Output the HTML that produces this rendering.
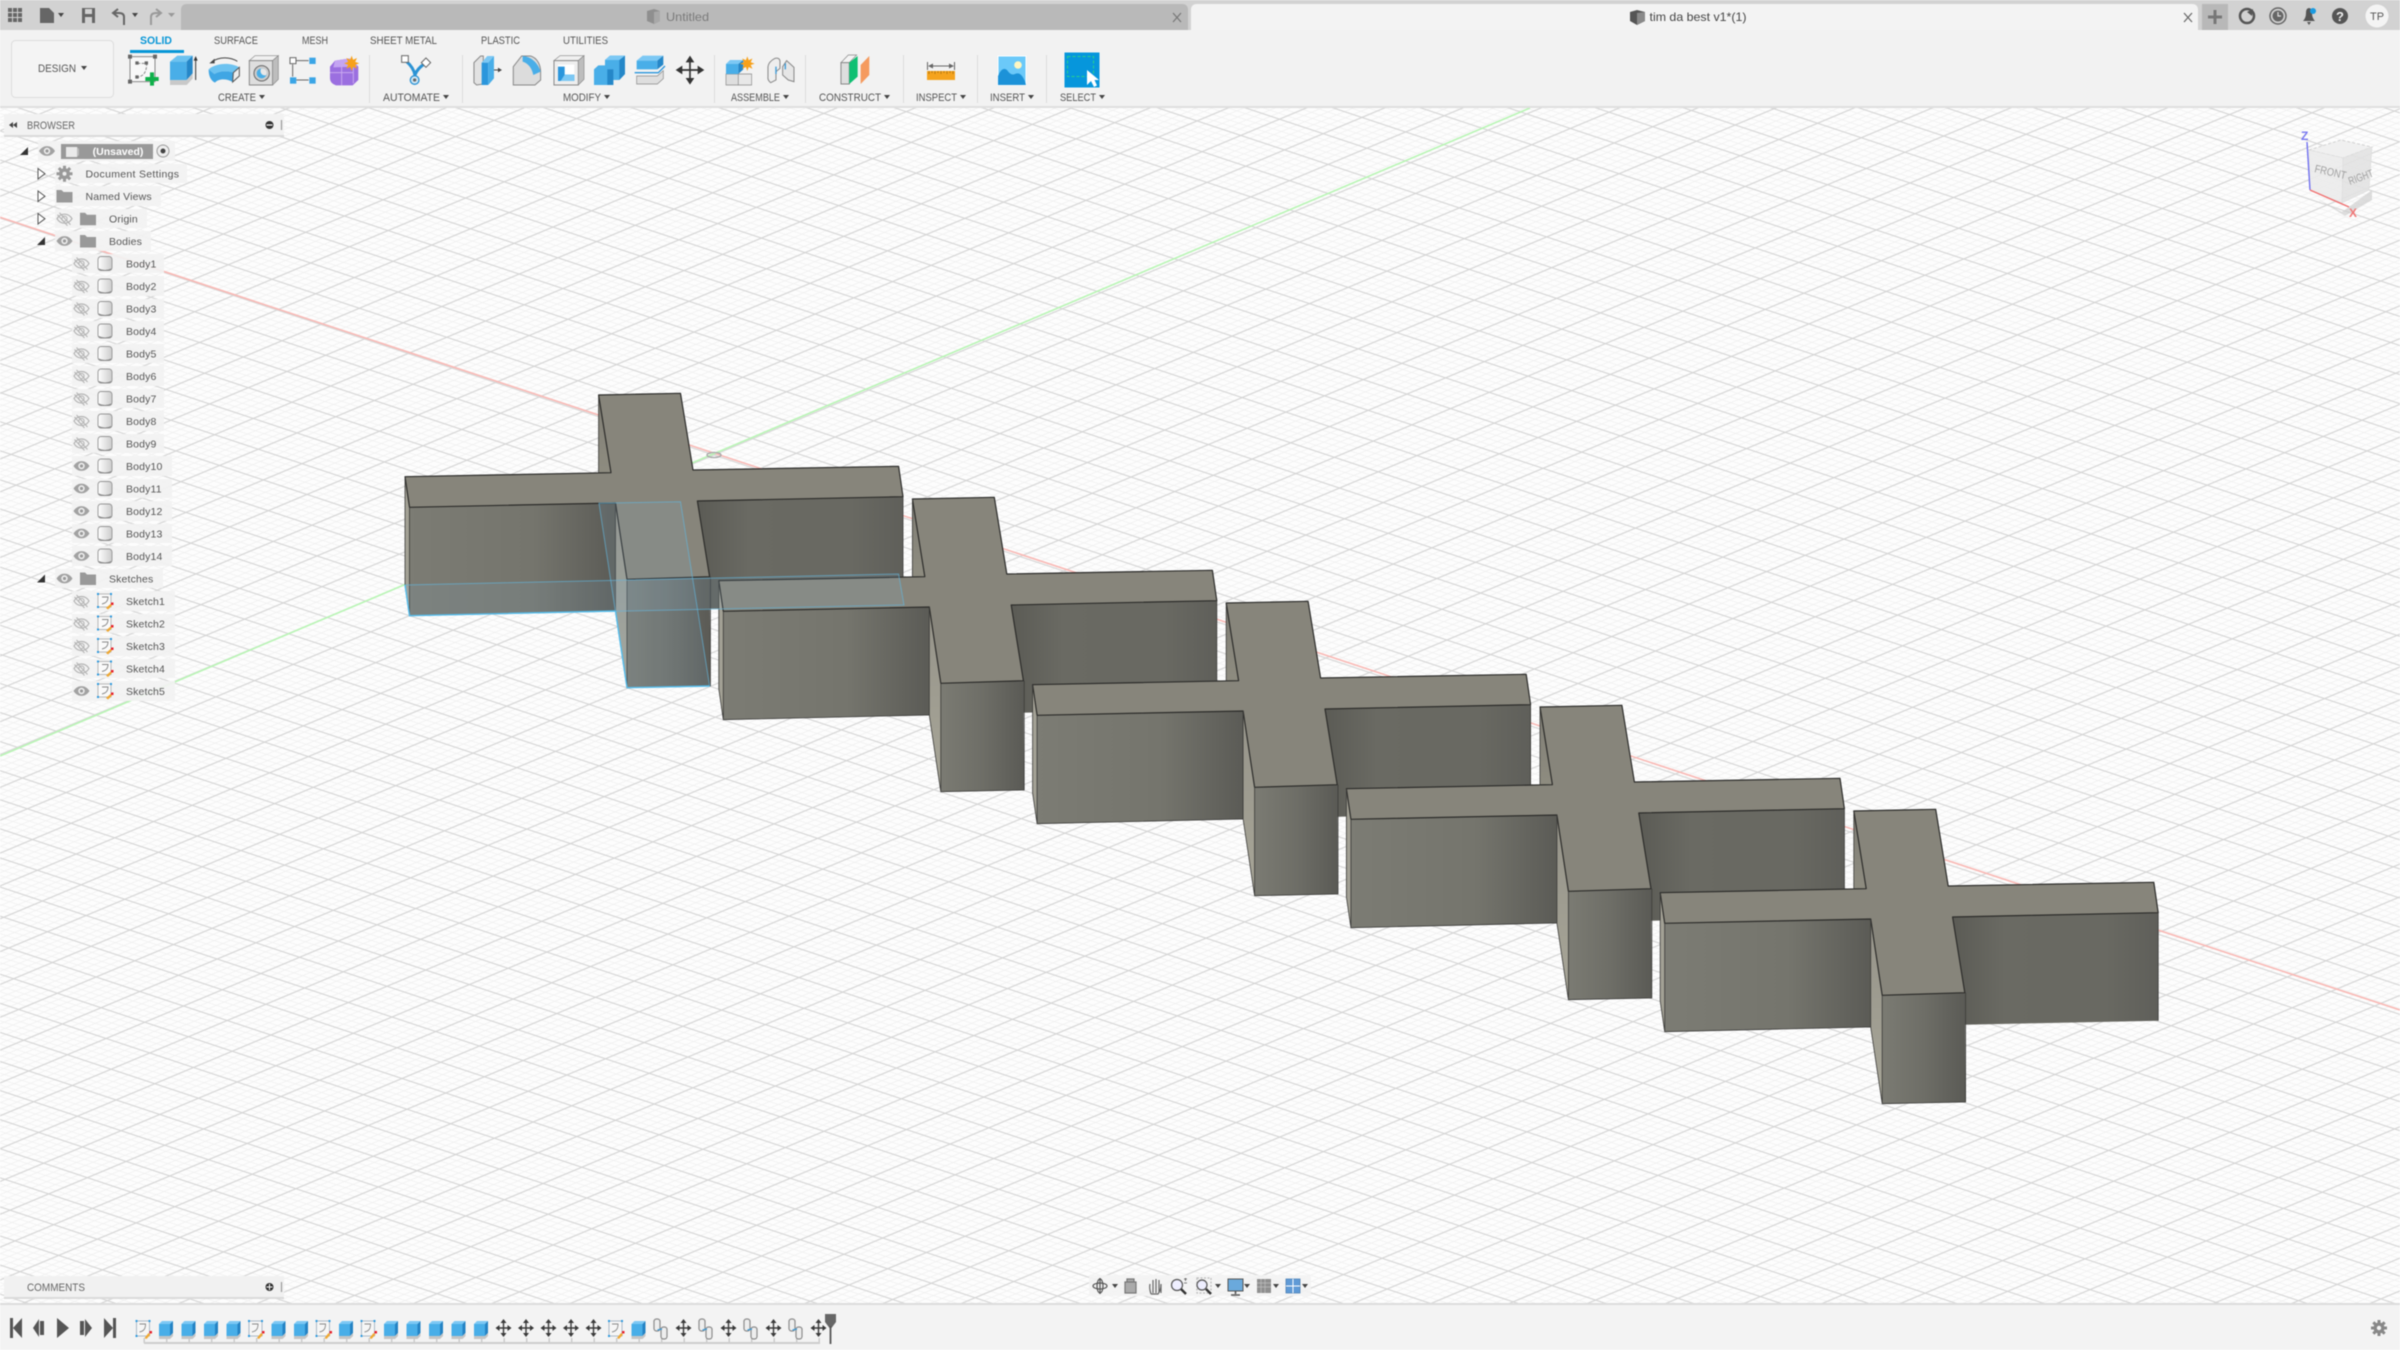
<!DOCTYPE html>
<html lang="en">
<head>
<meta charset="utf-8">
<title>tim da best v1*(1)</title>
<style>
html,body{margin:0;padding:0;background:#fff;width:2400px;height:1350px;overflow:hidden}
svg{display:block;filter:blur(.45px)}
text{font-family:"Liberation Sans",sans-serif}
.t{font-size:11px;fill:#555}
.b{font-size:10.5px;fill:#555;letter-spacing:.15px}
</style>
</head>
<body>
<svg xmlns="http://www.w3.org/2000/svg" width="2400" height="1350" viewBox="0 0 2400 1350">
<defs>
<pattern id="grid" width="50" height="50" patternUnits="userSpaceOnUse" patternTransform="matrix(.874 .29 .774 -.3248 672.8 455.87)">
<rect width="50" height="50" fill="#fdfdfd"/>
<path d="M5 0V50M15 0V50M35 0V50M45 0V50M0 5H50M0 15H50M0 35H50M0 45H50" stroke="#f0f0f0" stroke-width="1.3" fill="none"/>
<path d="M25 0V50M0 25H50" stroke="#d6d6d6" stroke-width="2" fill="none"/>
</pattern>
<linearGradient id="gl" x1="0" x2="1" y1="0" y2="0"><stop offset="0" stop-color="#7c7c74"/><stop offset=".6" stop-color="#75756d"/><stop offset="1" stop-color="#5b5b56"/></linearGradient>
<linearGradient id="gr" x1="0" x2="1" y1="0" y2="0"><stop offset="0" stop-color="#5b5b55"/><stop offset=".25" stop-color="#6a6a63"/><stop offset=".75" stop-color="#696962"/><stop offset="1" stop-color="#5f5f5a"/></linearGradient>
<linearGradient id="gb" x1="0" x2="1" y1="0" y2="0"><stop offset="0" stop-color="#7b7b73"/><stop offset=".5" stop-color="#6e6e67"/><stop offset="1" stop-color="#5a5a55"/></linearGradient>
<linearGradient id="gw" x1="0" x2="0" y1="0" y2="1"><stop offset="0" stop-color="#807e75"/><stop offset="1" stop-color="#8e8c80"/></linearGradient>
<linearGradient id="gs" x1="0" x2="0" y1="0" y2="1"><stop offset="0" stop-color="#96948a"/><stop offset="1" stop-color="#a8a698"/></linearGradient>
<linearGradient id="bi" x1="0" x2="1" y1="0" y2="0"><stop offset="0" stop-color="#fff"/><stop offset="1" stop-color="#ccc"/></linearGradient>

<g id="cross">
<polygon points="598.6,395 611,472.7 598.6,473" fill="url(#gw)"/>
<polygon points="697.4,501 903,496.7 903,604.7 697.4,609" fill="url(#gr)"/>
<polygon points="405,476.7 409.5,507.3 409.5,615.7 405,585" fill="#a3a195"/>
<polygon points="409.5,507.3 615.5,503 615.5,611 409.5,615.7" fill="url(#gl)"/>
<polygon points="615.5,503 627,579.3 627,687.7 615.5,611" fill="url(#gs)"/>
<polygon points="627,579.3 709.6,576.7 710.4,686 627,687.7" fill="url(#gb)"/>
<polygon points="598.6,395 680.5,393.3 693,470 898.6,466.3 903,496.7 697.4,501 709.6,576.7 627,579.3 615.5,503 409.5,507.3 405,476.7 611,472.7" fill="#87857b" stroke="#2c2c2a" stroke-width="1.2" stroke-linejoin="round"/>
<path d="M409.5 507.3V615.7L615.5 611M405 476.7V585L409.5 615.7M615.5 503V611L627 687.7L710.4 686V576.7M627 579.3V687.7M903 496.7V604.7M598.6 395V473" fill="none" stroke="#3a3a38" stroke-width=".8"/>
</g>

<g id="eye"><path d="M-8 0C-4 -6.5 4 -6.5 8 0C4 6.5 -4 6.5 -8 0Z" fill="#a2a2a2"/><circle r="3.2" fill="#eee"/><circle r="1.6" fill="#999"/></g>
<g id="eyeoff"><path d="M-7.5 0C-4 -6 4 -6 7.5 0C4 6 -4 6 -7.5 0Z" fill="#f2f2f2" stroke="#b4b4b4" stroke-width="1.2"/><circle r="2.6" fill="none" stroke="#b4b4b4"/><path d="M-5 -6L6 6M-7 -4L3 7" stroke="#b4b4b4" stroke-width="1.1"/></g>
<path id="folder" d="M-8 -6H-3L-1 -4H8V6.5H-8Z" fill="#999"/>
<g id="body"><rect x="-7" y="-7" width="14" height="14" rx="3" fill="url(#bi)" stroke="#959595" stroke-width=".9"/><path d="M-6.5 5.5Q0 8.5 6.5 5.5" fill="none" stroke="#888" stroke-width="1"/></g>
<g id="ss">
<rect x="-7" y="-7" width="13" height="13" fill="#fafafa" stroke="#aaa" stroke-width=".8"/>
<path d="M-3 -4H3C3 -1 2 2 -3 3" fill="none" stroke="#888" stroke-width=".9"/>
<path d="M-8 -8h2v2h-2zM5 -8h2v2h-2zM-8 5h2v2h-2zM3 5h2v2h-2z" fill="#2f9be0"/>
<path d="M1 7L5.5 3L7 4.5L3 8.5Z" fill="#f0a832"/><rect x="6" y="1.5" width="2.5" height="2.5" fill="#e8222c"/>
</g>
<g id="te">
<polygon points="1,8 4,5 15,5 12,8" fill="#7cc8f4"/>
<polygon points="1,8 12,8 12,20 1,20" fill="#48aee8"/>
<polygon points="12,8 15,5 15,17 12,20" fill="#2483c4"/>
<polygon points="1,20 12,20 15,17 15,20 12,23 1,23" fill="#c4c4c4"/>
</g>
<g id="ts">
<rect x="1" y="5" width="13" height="15" fill="#f6f6f6" stroke="#9ab" stroke-width=".8"/>
<path d="M4 8H10C10 12 9 15 4 16" fill="none" stroke="#888" stroke-width=".9"/>
<path d="M0 4h2v2h-2zM13 4h2v2h-2zM0 19h2v2h-2z" fill="#2f9be0"/>
<path d="M9 22L13 17L15 18.5L11 23Z" fill="#f0a832"/><rect x="14" y="15" width="2.5" height="2.5" fill="#e8222c"/>
</g>
<g id="tm" fill="#3a3a3a">
<path d="M7.3 7H8.7V19H7.3ZM2 12.3H14V13.7H2Z"/>
<path d="M8 4L11 8H5ZM8 22L5 18H11ZM0 13L4 10V16ZM16 13L12 10V16Z"/>
</g>
<g id="tj" fill="#eee" stroke="#8a8a8a" stroke-width="1.2">
<rect x="1" y="3" width="6" height="12" rx="2.5"/><rect x="8" y="11" width="6" height="12" rx="2.5"/>
<path d="M4.5 14L9 13" stroke="#3a9ad8" fill="none"/>
</g>
<polygon id="burst" points="0,-10 1.9,-4.6 7,-7 4.6,-1.9 10,0 4.6,1.9 7,7 1.9,4.6 0,10 -1.9,4.6 -7,7 -4.6,1.9 -10,0 -4.6,-1.9 -7,-7 -1.9,-4.6" fill="#f7a11a"/>
<polygon id="dn" points="0,0 6,0 3,4" fill="#444"/>
</defs>

<!-- viewport -->
<rect x="0" y="106" width="2400" height="1200" fill="url(#grid)"/>
<line x1="0" y1="217.3" x2="2400" y2="1010" stroke="#f9b9b5" stroke-width="1.6"/>
<line x1="0" y1="756" x2="1530" y2="108" stroke="#b9f5b5" stroke-width="1.6"/>
<ellipse cx="714" cy="455" rx="7" ry="2.6" fill="none" stroke="#aaa" stroke-width="1.4"/>

<use href="#cross"/>
<use href="#cross" transform="translate(313.8 104)"/>
<polygon points="405,585 898.6,574 904,605 409.5,615.7" fill="#86b4cf" fill-opacity=".14" stroke="#62b6dc" stroke-opacity=".65" stroke-width="1"/>
<polygon points="599,503.3 680.5,501.7 709.6,686 627,687.7" fill="#86b4cf" fill-opacity=".14" stroke="#62b6dc" stroke-opacity=".65" stroke-width="1"/>
<path d="M405 585L409.5 615.7L615.5 611M627 687.7L709.6 686M615.5 611L627 687.7" fill="none" stroke="#55bdec" stroke-width="1.4"/>
<use href="#cross" transform="translate(627.6 208)"/>
<use href="#cross" transform="translate(941.4 312)"/>
<use href="#cross" transform="translate(1255.2 416)"/>

<!-- view cube -->
<g>
<polygon points="2316,198 2342,212 2372,190 2372,200 2345,216" fill="#cfcfcf" opacity=".7"/>
<polygon points="2309,150 2341,140 2372,147 2343,158" fill="#f0f0f0" stroke="#c8c8c8" stroke-dasharray="3 2" stroke-width=".8"/>
<polygon points="2309,150 2343,158 2342,203 2310,190" fill="#ebebeb" fill-opacity=".9" stroke="#ddd" stroke-width=".6"/>
<polygon points="2343,158 2372,147 2369,190 2342,203" fill="#e2e2e2" fill-opacity=".9" stroke="#ddd" stroke-width=".6"/>
<text transform="translate(2314 172) rotate(13) scale(.85 1)" font-size="11" fill="#a0a0a0">FRONT</text>
<text transform="translate(2350 185) rotate(-20) scale(.75 1)" font-size="11" fill="#a0a0a0">RIGHT</text>
<line x1="2307" y1="142" x2="2310" y2="190" stroke="#6f6ff0" stroke-width="1.4"/>
<line x1="2310" y1="190" x2="2349" y2="207" stroke="#f07070" stroke-width="1.4"/>
<text x="2301" y="140" font-size="12" font-weight="bold" fill="#7a7af0">Z</text>
<text x="2349" y="217" font-size="12" font-weight="bold" fill="#f07878">X</text>
</g>

<!-- top tab bar -->
<rect x="0" y="0" width="2400" height="30" fill="#d2d2d2"/>
<path d="M181 30V10Q181 4 187 4H1182Q1188 4 1188 10V30Z" fill="#b9b9b9"/>
<path d="M1191 30V10Q1191 4 1197 4H2192Q2198 4 2198 10V30Z" fill="#f3f3f3"/>
<rect x="2202" y="4" width="26" height="26" fill="#b8b8b8"/>
<g fill="#666">
<path d="M8 8h4v4H8zM13 8h4v4h-4zM18 8h4v4h-4zM8 13h4v4H8zM13 13h4v4h-4zM18 13h4v4h-4zM8 18h4v4H8zM13 18h4v4h-4zM18 18h4v4h-4z"/>
<path d="M40 8H49L54 13V23H40Z"/>
<path d="M82 8H95V23H82ZM85 9V14H92V9ZM85 17V23H92V17Z" fill-rule="evenodd"/>
</g>
<use href="#dn" x="58" y="13"/>
<path d="M124 25V17Q124 13 119 13H114M118 9L113 13L118 17" fill="none" stroke="#666" stroke-width="2"/>
<use href="#dn" x="132" y="13"/>
<path d="M151 25V17Q151 13 156 13H160M156 9L161 13L156 17" fill="none" stroke="#9a9a9a" stroke-width="2"/>
<polygon points="168,13 175,13 171.5,17" fill="#999"/>
<path d="M647 11L654 9L660 11V21L654 24L647 21Z" fill="#8f8f8f"/><path d="M654 12V24L660 21V11Z" fill="#a8a8a8"/>
<text x="666" y="21" font-size="12" fill="#7b7b7b" textLength="43" lengthAdjust="spacingAndGlyphs">Untitled</text>
<path d="M1173 13L1181 22M1181 13L1173 22" stroke="#777" stroke-width="1.2"/>
<path d="M1630 12L1637 10L1645 12V21L1637 25L1630 21Z" fill="#555"/><path d="M1637 13V25L1645 21V12Z" fill="#8a8a8a"/>
<text x="1649.5" y="21" font-size="12" fill="#444" textLength="97" lengthAdjust="spacingAndGlyphs">tim da best v1*(1)</text>
<path d="M2184 13L2192 22M2192 13L2184 22" stroke="#666" stroke-width="1.2"/>
<path d="M2215 10V24M2208 17H2222" stroke="#777" stroke-width="3"/>
<circle cx="2247" cy="16" r="7" fill="none" stroke="#555" stroke-width="2.5"/><path d="M2247 12L2253 9L2252 16Z" fill="#555"/>
<circle cx="2278" cy="16" r="8" fill="none" stroke="#666" stroke-width="1.5"/><circle cx="2278" cy="16" r="5.5" fill="#666"/><path d="M2278 12V16H2281" stroke="#ddd" stroke-width="1.2" fill="none"/>
<path d="M2303 21Q2306 18 2306 13Q2306 8 2309 8Q2312 8 2312 13Q2312 18 2315 21ZM2307 22H2311L2309 25Z" fill="#555"/><circle cx="2313" cy="11" r="3" fill="#1a9ae0"/>
<circle cx="2340" cy="16" r="8" fill="#555"/><text x="2340" y="21" font-size="13" font-weight="bold" fill="#eee" text-anchor="middle">?</text>
<circle cx="2377" cy="16" r="11.5" fill="#f4f4f4"/><text x="2377" y="20" font-size="11" fill="#555" text-anchor="middle" textLength="14" lengthAdjust="spacingAndGlyphs">TP</text>

<!-- toolbar -->
<rect x="0" y="30" width="2400" height="76" fill="#f2f2f2"/>
<rect x="0" y="106" width="2400" height="2" fill="#dfdfdf"/>
<rect x="11.5" y="40.5" width="102" height="57" rx="4" fill="#f4f4f4" stroke="#dcdcdc"/>
<text class="t" x="38" y="72" textLength="38" lengthAdjust="spacingAndGlyphs">DESIGN</text><use href="#dn" x="81" y="66"/>

<text x="140" y="44" font-size="11" font-weight="bold" fill="#0696d7" textLength="32" lengthAdjust="spacingAndGlyphs">SOLID</text>
<rect x="130" y="50" width="54" height="3" fill="#0696d7"/>
<text class="t" x="214" y="44" textLength="44" lengthAdjust="spacingAndGlyphs">SURFACE</text>
<text class="t" x="302" y="44" textLength="26" lengthAdjust="spacingAndGlyphs">MESH</text>
<text class="t" x="370" y="44" textLength="67" lengthAdjust="spacingAndGlyphs">SHEET METAL</text>
<text class="t" x="481" y="44" textLength="39" lengthAdjust="spacingAndGlyphs">PLASTIC</text>
<text class="t" x="563" y="44" textLength="45" lengthAdjust="spacingAndGlyphs">UTILITIES</text>

<g stroke="#dcdcdc" stroke-width="1">
<path d="M369.5 55V103M462.5 55V103M714.5 55V103M805.5 55V103M903.5 55V103M977.5 55V103M1046.5 55V103"/>
</g>
<text class="t" x="218" y="101" textLength="38" lengthAdjust="spacingAndGlyphs">CREATE</text><use href="#dn" x="259" y="95"/>
<text class="t" x="383" y="101" textLength="57" lengthAdjust="spacingAndGlyphs">AUTOMATE</text><use href="#dn" x="443" y="95"/>
<text class="t" x="563" y="101" textLength="38" lengthAdjust="spacingAndGlyphs">MODIFY</text><use href="#dn" x="604" y="95"/>
<text class="t" x="731" y="101" textLength="49" lengthAdjust="spacingAndGlyphs">ASSEMBLE</text><use href="#dn" x="783" y="95"/>
<text class="t" x="819" y="101" textLength="62" lengthAdjust="spacingAndGlyphs">CONSTRUCT</text><use href="#dn" x="884" y="95"/>
<text class="t" x="916" y="101" textLength="41" lengthAdjust="spacingAndGlyphs">INSPECT</text><use href="#dn" x="960" y="95"/>
<text class="t" x="990" y="101" textLength="35" lengthAdjust="spacingAndGlyphs">INSERT</text><use href="#dn" x="1028" y="95"/>
<text class="t" x="1060" y="101" textLength="36" lengthAdjust="spacingAndGlyphs">SELECT</text><use href="#dn" x="1099" y="95"/>

<!-- toolbar icons traced in zoom coordinates -->
<g transform="translate(120 30) scale(.3333)">
<!-- sketch -->
<rect x="30" y="80" width="75" height="75" fill="#f8f8f8" stroke="#888" stroke-width="3"/>
<path d="M52 100H80C80 125 72 138 52 142" fill="none" stroke="#888" stroke-width="3" stroke-dasharray="9 4"/>
<path d="M24 74h12v12H24zM99 74h12v12H99zM24 149h12v12H24z" fill="#666"/>
<path d="M46 94h10v10H46zM74 94h10v10H74zM46 136h10v10H46z" fill="#666"/>
<path d="M90 127h12v14h14v12h-14v14H90v-14H76v-12h14Z" fill="#0fb04a"/>
<!-- extrude -->
<polygon points="150,95 172,77 218,77 200,95" fill="#6cc2f0"/>
<polygon points="150,95 200,95 200,150 150,150" fill="#49aee8"/>
<polygon points="200,95 218,77 218,130 200,150" fill="#2587c8"/>
<polygon points="150,150 200,150 218,130 218,146 200,165 150,165" fill="#c9c9c9"/>
<path d="M227 150V88" stroke="#333" stroke-width="3"/><polygon points="227,78 221,92 233,92" fill="#333"/>
<!-- revolve -->
<path d="M266 118C285 100 330 95 358 112L340 128C325 122 300 122 283 132Z" fill="#6cc2f0"/>
<path d="M266 118L283 132C300 122 325 122 340 128L338 156C320 145 295 145 285 158C270 150 266 135 266 118Z" fill="#3fa6e4"/>
<path d="M340 128L358 112V138L338 156Z" fill="#eee" stroke="#555" stroke-width="3"/>
<path d="M276 95C298 80 330 80 352 94" fill="none" stroke="#444" stroke-width="3"/><polygon points="268,100 284,86 284,100" fill="#444"/>
<!-- hole -->
<polygon points="388,92 405,77 475,77 458,92" fill="#f0f0f0" stroke="#888" stroke-width="2"/>
<polygon points="388,92 458,92 458,165 388,165" fill="#dedede" stroke="#888" stroke-width="3"/>
<polygon points="458,92 475,77 475,148 458,165" fill="#bdbdbd" stroke="#888" stroke-width="2"/>
<circle cx="425" cy="130" r="23" fill="#ccc" stroke="#666" stroke-width="3"/>
<circle cx="425" cy="130" r="15" fill="#4aaee6"/><path d="M423 116C418 128 426 138 438 136C444 124 436 114 423 116Z" fill="#e8e8e8"/>
<!-- pattern -->
<path d="M529 92H566M518 103V140M529 150H566" stroke="#666" stroke-width="3"/>
<rect x="510" y="83" width="18" height="18" fill="#fff" stroke="#666" stroke-width="3"/>
<rect x="568" y="83" width="19" height="19" fill="#3aa5e6"/><rect x="510" y="142" width="19" height="19" fill="#3aa5e6"/><rect x="568" y="142" width="19" height="19" fill="#3aa5e6"/>
<!-- form -->
<path d="M645 92L690 85L715 110V150L698 166H648Q630 160 630 145V110Z" fill="#9b6fe0"/>
<path d="M645 92L690 85L712 110L640 112Z" fill="#c4a4f2"/>
<path d="M630 128H700M665 100V166M700 112V160" stroke="#c9a9f0" stroke-width="3" fill="none"/>
<use href="#burst" transform="translate(695 100) scale(2.3)"/>
<!-- automate -->
<path d="M860 95Q880 112 885 135Q892 115 916 100" fill="none" stroke="#2c93d4" stroke-width="9"/>
<path d="M885 130V145" stroke="#2c93d4" stroke-width="9"/>
<rect x="845" y="77" width="20" height="20" fill="#fff" stroke="#666" stroke-width="3"/>
<polygon points="918,84 932,98 918,112 904,98" fill="#fff" stroke="#666" stroke-width="3"/>
<circle cx="884" cy="150" r="13" fill="#cfe6f4" stroke="#2c93d4" stroke-width="4"/><circle cx="884" cy="150" r="5" fill="#666"/>
<!-- press pull -->
<polygon points="1062,98 1082,78 1090,78 1090,162 1070,165 1062,158" fill="#e2e2e2" stroke="#888" stroke-width="3"/>
<polygon points="1085,98 1102,78 1122,78 1105,98" fill="#7cc8f4"/>
<polygon points="1085,98 1105,98 1105,165 1085,165" fill="#2b96dc"/>
<polygon points="1105,98 1122,78 1122,145 1105,165" fill="#49aee8"/>
<path d="M1122 120H1138" stroke="#444" stroke-width="3"/><polygon points="1146,120 1134,113 1134,127" fill="#444"/>
<!-- fillet -->
<path d="M1180 110L1205 78H1232C1252 84 1262 105 1262 125V150L1245 165H1180Z" fill="#dcdcdc" stroke="#888" stroke-width="3"/>
<path d="M1208 78C1235 80 1255 100 1262 125L1240 135C1236 115 1225 100 1208 95Z" fill="#49aee8"/>
</g>
<g transform="translate(530 30) scale(.3333)">
<!-- shell -->
<polygon points="72,92 90,77 162,77 145,92" fill="#f0f0f0" stroke="#888" stroke-width="2"/>
<polygon points="72,92 145,92 145,165 72,165" fill="#eeeeee" stroke="#888" stroke-width="3"/>
<polygon points="145,92 162,77 162,148 145,165" fill="#bdbdbd" stroke="#888" stroke-width="2"/>
<rect x="84" y="104" width="49" height="49" fill="#fff"/>
<polygon points="84,110 104,110 104,134 133,134 133,153 84,153" fill="#2b96dc"/><polygon points="104,134 133,134 133,153 92,153" fill="#7cc8f4"/>
<!-- combine -->
<polygon points="192,118 205,106 225,106 225,90 240,77 285,77 285,132 268,150 250,150 250,165 192,165" fill="#49aee8"/>
<polygon points="268,90 285,77 285,132 268,150" fill="#2587c8"/>
<polygon points="225,90 240,77 285,77 268,90" fill="#7cc8f4"/>
<polygon points="232,118 250,118 250,165 232,165" fill="#2587c8"/>
<!-- offset -->
<polygon points="320,92 338,77 400,77 382,92" fill="#7cc8f4"/>
<polygon points="320,92 382,92 382,118 320,118" fill="#49aee8"/>
<polygon points="382,92 400,77 400,104 382,118" fill="#2587c8"/>
<path d="M314 128H385L405 108" fill="none" stroke="#2b96dc" stroke-width="4"/>
<polygon points="320,138 382,138 400,122 400,146 382,162 320,162" fill="#dedede" stroke="#888" stroke-width="2"/>
<!-- move -->
<path d="M480 90V150M450 120H510" stroke="#333" stroke-width="5"/>
<path d="M480 77L493 97H467ZM480 164L467 144H493ZM437 120L457 107V133ZM523 120L503 107V133Z" fill="#333"/>
<!-- new component -->
<polygon points="588,132 625,132 625,165 588,165" fill="#dedede" stroke="#888" stroke-width="2"/>
<polygon points="625,132 665,132 665,165 625,165" fill="#e8e8e8" stroke="#888" stroke-width="2"/>
<polygon points="588,102 600,90 640,90 625,102" fill="#7cc8f4"/>
<polygon points="588,102 625,102 625,132 588,132" fill="#49aee8"/>
<polygon points="625,102 640,90 640,118 625,132" fill="#2587c8"/>
<use href="#burst" transform="translate(652 101) scale(2.2)"/>
<!-- joint -->
<path d="M714 110Q716 95 735 85Q750 82 750 95V115L738 125V150L722 158Q712 150 714 140Z" fill="#eee" stroke="#888" stroke-width="3"/>
<path d="M758 110L770 92L792 112V155L775 150L758 135Z" fill="#e6e6e6" stroke="#888" stroke-width="3"/>
<path d="M738 110V132M766 100V118" stroke="#3a9ad8" stroke-width="4"/>
<!-- construct -->
<polygon points="933,98 955,75 980,75 958,98" fill="#f4f4f4" stroke="#888" stroke-width="2"/>
<polygon points="933,98 958,98 958,162 933,162" fill="#dedede" stroke="#888" stroke-width="3"/>
<polygon points="958,98 983,78 983,140 958,162" fill="#0fc073"/>
<polygon points="992,105 1018,78 1018,135 992,162" fill="#f59a5e"/>
</g>
<!-- inspect -->
<path d="M927.5 62V70M954.5 62V70" stroke="#666"/><path d="M931 66H951" stroke="#666"/><path d="M928 66L933 63.5V68.5ZM954 66L949 63.5V68.5Z" fill="#666"/>
<rect x="927" y="71" width="28" height="9" fill="#f5a31d"/>
<path d="M929 71v3M932 71v2M935 71v3M938 71v2M941 71v3M944 71v2M947 71v3M950 71v2M953 71v3" stroke="#a86f10" stroke-width=".8"/>
<!-- insert -->
<rect x="998" y="56" width="28" height="29" fill="#6bc9f9" stroke="#fff"/>
<path d="M998 85V76Q1002 66 1007 70Q1011 76 1015 74Q1019 72 1022 76Q1025 80 1026 85Z" fill="#1c92d8"/>
<circle cx="1018" cy="65" r="3.8" fill="#fdf6c2"/>
<!-- select -->
<rect x="1064" y="52" width="36" height="36" fill="#0696dc" stroke="#f4f4f4"/>
<rect x="1067.5" y="56.5" width="26" height="20" fill="none" stroke="#27d28b" stroke-dasharray="3 2"/>
<path d="M1087 70V85L1091 81L1094 87L1097 85.5L1094.5 80H1099Z" fill="#fff"/>

<!-- browser panel -->
<rect x="4" y="114" width="280" height="22" fill="#f2f2f2"/>
<rect x="4" y="135" width="280" height="2" fill="#dadada"/>
<path d="M9 125L13 122V128ZM13 125L17 122V128Z" fill="#444"/>
<text x="27" y="129" style="font-size:11px;fill:#666" textLength="48" lengthAdjust="spacingAndGlyphs">BROWSER</text>
<circle cx="269.5" cy="125" r="4" fill="#333"/><rect x="266.5" y="124.4" width="6" height="1.2" fill="#fff"/>
<path d="M281.5 120V130" stroke="#999" stroke-width="1.2"/>

<g fill="#f2f2f2" fill-opacity=".92">
<rect x="38" y="141" width="137" height="20"/>
<rect x="55" y="164" width="132" height="19"/>
<rect x="55" y="186" width="106" height="20"/>
<rect x="55" y="209" width="92" height="19"/>
<rect x="55" y="231" width="96" height="20"/>
<rect x="72" y="254" width="92" height="19"/>
<rect x="72" y="276" width="92" height="20"/>
<rect x="72" y="299" width="92" height="19"/>
<rect x="72" y="321" width="92" height="20"/>
<rect x="72" y="344" width="92" height="19"/>
<rect x="72" y="366" width="92" height="20"/>
<rect x="72" y="389" width="92" height="19"/>
<rect x="72" y="411" width="92" height="20"/>
<rect x="72" y="434" width="92" height="19"/>
<rect x="72" y="456" width="100" height="20"/>
<rect x="72" y="479" width="100" height="19"/>
<rect x="72" y="501" width="100" height="20"/>
<rect x="72" y="524" width="100" height="19"/>
<rect x="72" y="546" width="100" height="20"/>
<rect x="55" y="569" width="108" height="19"/>
<rect x="72" y="591" width="103" height="20"/>
<rect x="72" y="614" width="103" height="19"/>
<rect x="72" y="636" width="103" height="20"/>
<rect x="72" y="659" width="103" height="19"/>
<rect x="72" y="681" width="103" height="20"/>
</g>
<!-- expand arrows -->
<path d="M20 155H28V147Z" fill="#333"/>
<path d="M38 168.5L45 173.7L38 179ZM38 191L45 196.2L38 201.5ZM38 213.5L45 218.7L38 224Z" fill="#fff" stroke="#555" stroke-width="1"/>
<path d="M37 245H45V237Z" fill="#333"/>
<path d="M37 582.5H45V574.5Z" fill="#333"/>

<!-- root row -->
<use href="#eye" x="47" y="151"/>
<rect x="61" y="144" width="92" height="15" fill="#999"/>
<path d="M66 147H77V157H66Z" fill="#eaeaea"/><path d="M77 147L79 149V155L77 157Z" fill="#bbb"/>
<text x="118" y="155" font-size="10.5" font-weight="bold" fill="#fff" text-anchor="middle">(Unsaved)</text>
<circle cx="163" cy="151" r="6" fill="#eee" stroke="#999"/><circle cx="163" cy="151" r="2.5" fill="#444"/>
<!-- doc settings -->
<g transform="translate(64.5 173.7)" fill="#999"><circle r="5.5"/><path d="M-1.5 -8h3v16h-3zM-8 -1.5h16v3h-16z"/><path d="M-1.5 -8h3v16h-3zM-8 -1.5h16v3h-16z" transform="rotate(45)"/><circle r="2" fill="#eee"/></g>
<text class="b" x="85.5" y="177.5" style="letter-spacing:.3px">Document Settings</text>
<use href="#folder" x="64.5" y="196"/><text class="b" x="85.5" y="200">Named Views</text>
<use href="#eyeoff" x="64.5" y="218.7"/><use href="#folder" x="88" y="218.7"/><text class="b" x="109" y="222.5">Origin</text>
<use href="#eye" x="64.5" y="241"/><use href="#folder" x="88" y="241"/><text class="b" x="109" y="245">Bodies</text>

<use href="#eyeoff" x="81.5" y="263.5"/><use href="#body" x="105" y="263.5"/><text class="b" x="126" y="267.5">Body1</text>
<use href="#eyeoff" x="81.5" y="286"/><use href="#body" x="105" y="286"/><text class="b" x="126" y="290">Body2</text>
<use href="#eyeoff" x="81.5" y="308.5"/><use href="#body" x="105" y="308.5"/><text class="b" x="126" y="312.5">Body3</text>
<use href="#eyeoff" x="81.5" y="331"/><use href="#body" x="105" y="331"/><text class="b" x="126" y="335">Body4</text>
<use href="#eyeoff" x="81.5" y="353.5"/><use href="#body" x="105" y="353.5"/><text class="b" x="126" y="357.5">Body5</text>
<use href="#eyeoff" x="81.5" y="376"/><use href="#body" x="105" y="376"/><text class="b" x="126" y="380">Body6</text>
<use href="#eyeoff" x="81.5" y="398.5"/><use href="#body" x="105" y="398.5"/><text class="b" x="126" y="402.5">Body7</text>
<use href="#eyeoff" x="81.5" y="421"/><use href="#body" x="105" y="421"/><text class="b" x="126" y="425">Body8</text>
<use href="#eyeoff" x="81.5" y="443.5"/><use href="#body" x="105" y="443.5"/><text class="b" x="126" y="447.5">Body9</text>
<use href="#eye" x="81.5" y="466"/><use href="#body" x="105" y="466"/><text class="b" x="126" y="470">Body10</text>
<use href="#eye" x="81.5" y="488.5"/><use href="#body" x="105" y="488.5"/><text class="b" x="126" y="492.5">Body11</text>
<use href="#eye" x="81.5" y="511"/><use href="#body" x="105" y="511"/><text class="b" x="126" y="515">Body12</text>
<use href="#eye" x="81.5" y="533.5"/><use href="#body" x="105" y="533.5"/><text class="b" x="126" y="537.5">Body13</text>
<use href="#eye" x="81.5" y="556"/><use href="#body" x="105" y="556"/><text class="b" x="126" y="560">Body14</text>

<use href="#eye" x="64.5" y="578.5"/><use href="#folder" x="88" y="578.5"/><text class="b" x="109" y="582.5">Sketches</text>
<use href="#eyeoff" x="81.5" y="601"/><use href="#ss" x="105" y="601"/><text class="b" x="126" y="605">Sketch1</text>
<use href="#eyeoff" x="81.5" y="623.5"/><use href="#ss" x="105" y="623.5"/><text class="b" x="126" y="627.5">Sketch2</text>
<use href="#eyeoff" x="81.5" y="646"/><use href="#ss" x="105" y="646"/><text class="b" x="126" y="650">Sketch3</text>
<use href="#eyeoff" x="81.5" y="668.5"/><use href="#ss" x="105" y="668.5"/><text class="b" x="126" y="672.5">Sketch4</text>
<use href="#eye" x="81.5" y="691"/><use href="#ss" x="105" y="691"/><text class="b" x="126" y="695">Sketch5</text>

<!-- nav bar -->
<rect x="1089" y="1275" width="222" height="21" fill="#f3f3f3" fill-opacity=".9"/>
<g fill="none" stroke="#555" stroke-width="1.2">
<ellipse cx="1100" cy="1286" rx="7" ry="3"/><path d="M1100 1278V1294"/><ellipse cx="1100" cy="1286" rx="3" ry="7"/>
<path d="M1125 1282H1136V1293H1125ZM1127 1282V1279H1134V1282" fill="#aaa" stroke="#777"/>
<path d="M1151 1294Q1149 1288 1150 1284M1153 1293V1280M1156 1293V1279M1159 1293V1280M1161 1293V1284Q1161 1290 1158 1294H1151" stroke="#666"/>
<circle cx="1177" cy="1285" r="5.5" fill="#eef" stroke="#555"/><path d="M1181 1289L1186 1294" stroke-width="2.4" stroke="#333"/><path d="M1184 1279h3M1185.5 1278v3M1184 1283h3" stroke="#555" stroke-width=".8"/>
<rect x="1197" y="1278" width="14" height="15" stroke="#bbb" stroke-dasharray="2 1.5"/><circle cx="1202" cy="1285" r="5" fill="#eef"/><path d="M1206 1289L1211 1294" stroke-width="2.4" stroke="#333"/>
</g>
<rect x="1228" y="1279" width="15" height="12" fill="#6aa9dc" stroke="#555"/><path d="M1235.5 1291V1294M1231 1295H1240" stroke="#555" stroke-width="1.6"/>
<rect x="1257" y="1279" width="14" height="14" fill="#8f8f8f"/><path d="M1261 1279V1293M1265 1279V1293M1257 1283H1271M1257 1287H1271" stroke="#bdbdbd" stroke-width=".7"/>
<path d="M1286 1279H1300V1293H1286Z" fill="#5f9ad6" stroke="#4a7fb5" stroke-width=".8"/><path d="M1293 1279V1293M1286 1286H1300" stroke="#fff" stroke-width="1"/>
<use href="#dn" x="1112" y="1284"/><use href="#dn" x="1215" y="1284"/><use href="#dn" x="1244" y="1284"/><use href="#dn" x="1273" y="1284"/><use href="#dn" x="1302" y="1284"/>

<!-- comments panel -->
<rect x="4" y="1276" width="280" height="22" fill="#f1f1f1"/>
<rect x="4" y="1297" width="280" height="2" fill="#dadada"/>
<text x="27" y="1291" font-size="11" fill="#666" textLength="58" lengthAdjust="spacingAndGlyphs">COMMENTS</text>
<circle cx="269.5" cy="1287" r="4" fill="#333"/><path d="M266.5 1287H272.5M269.5 1284V1290" stroke="#fff" stroke-width="1"/>
<path d="M281.5 1282V1292" stroke="#999" stroke-width="1.2"/>

<!-- timeline bar -->
<rect x="0" y="1304" width="2400" height="46" fill="#f3f3f3"/>
<rect x="0" y="1303" width="2400" height="2" fill="#dcdcdc"/>
<g fill="#555">
<path d="M10 1318H13V1338H10ZM22 1318V1338L13 1328Z"/>
<path d="M33 1328L39 1319V1337ZM40 1321H44V1335H40Z"/>
<path d="M57 1318L69 1328L57 1338Z"/>
<path d="M80 1321H84V1335H80ZM85 1319L92 1328L85 1337Z"/>
<path d="M104 1318L113 1328L104 1338ZM113 1318H116V1338H113Z"/>
</g>
<line x1="143.5" y1="1340.5" x2="820" y2="1340.5" stroke="#c9c9c9" stroke-width="5" stroke-dasharray="1.4 21.1"/>
<rect x="144" y="1342" width="676" height="2" fill="#cdcdcd"/>

<use href="#ts" x="135.5" y="1316"/><use href="#te" x="158" y="1316"/><use href="#te" x="180.5" y="1316"/><use href="#te" x="203" y="1316"/><use href="#te" x="225.5" y="1316"/>
<use href="#ts" x="248" y="1316"/><use href="#te" x="270.5" y="1316"/><use href="#te" x="293" y="1316"/><use href="#ts" x="315.5" y="1316"/><use href="#te" x="338" y="1316"/>
<use href="#ts" x="360.5" y="1316"/><use href="#te" x="383" y="1316"/><use href="#te" x="405.5" y="1316"/><use href="#te" x="428" y="1316"/><use href="#te" x="450.5" y="1316"/><use href="#te" x="473" y="1316"/>
<use href="#tm" x="495.5" y="1315"/><use href="#tm" x="518" y="1315"/><use href="#tm" x="540.5" y="1315"/><use href="#tm" x="563" y="1315"/><use href="#tm" x="585.5" y="1315"/>
<use href="#ts" x="608" y="1316"/><use href="#te" x="630.5" y="1316"/>
<use href="#tj" x="653" y="1316"/><use href="#tm" x="675.5" y="1315"/><use href="#tj" x="698" y="1316"/><use href="#tm" x="720.5" y="1315"/><use href="#tj" x="743" y="1316"/><use href="#tm" x="765.5" y="1315"/><use href="#tj" x="788" y="1316"/><use href="#tm" x="810.5" y="1315"/>

<path d="M825 1314H836V1322L831.5 1328H829.5L825 1322Z" fill="#666"/><rect x="829.6" y="1326" width="1.8" height="18" fill="#555"/>

<g transform="translate(2379 1328)" fill="#888"><circle r="5.5"/><path d="M-1.5 -8h3v16h-3zM-8 -1.5h16v3h-16z"/><path d="M-1.5 -8h3v16h-3zM-8 -1.5h16v3h-16z" transform="rotate(45)"/><circle r="2.2" fill="#f3f3f3"/></g>
</svg>
</body>
</html>
